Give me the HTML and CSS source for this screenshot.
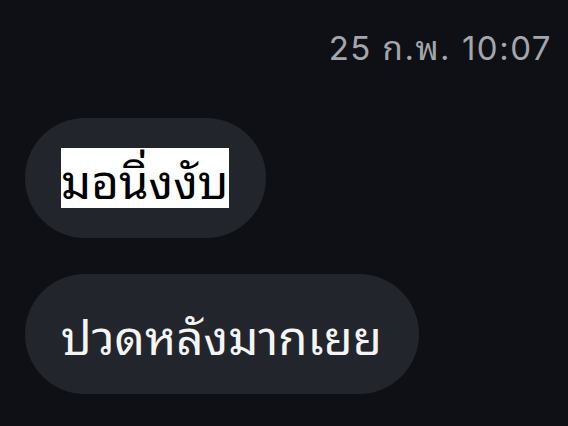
FILE: index.html
```html
<!DOCTYPE html>
<html lang="th">
<head>
    <meta charset="UTF-8">
    <meta name="viewport" content="width=device-width, initial-scale=1.0">
    <title>Chat</title>
    <link rel="stylesheet" href="styles.css">
</head>
<body>
    <div class="chat">
        <div class="chat__time">25 ก.พ. 10:07</div>
        <div class="bubble">
            <span class="bubble__text bubble__text--selected">มอนิ่งงับ</span>
        </div>
        <div class="bubble">
            <span class="bubble__text">ปวดหลังมากเยย</span>
        </div>
    </div>
</body>
</html>
```

FILE: styles.css
```css
* {
    margin: 0;
    padding: 0;
    box-sizing: border-box;
}

body {
    background-color: #0e1015;
    font-family: Inter, "Noto Sans Thai Looped", "Noto Sans Thai", sans-serif;
    width: 568px;
    height: 426px;
    overflow: hidden;
}

.chat {
    display: flex;
    flex-direction: column;
    align-items: flex-start;
    padding: 28px 16px 0 25px;
}

.chat__time {
    align-self: flex-end;
    color: #a3a6ab;
    font-size: 33px;
    letter-spacing: 1.5px;
    line-height: 40px;
    margin-bottom: 50px;
}

.bubble {
    background-color: #22252b;
    border-radius: 60px;
    height: 120px;
    padding: 0 37px 0 36px;
    display: flex;
    align-items: center;
    margin-bottom: 36px;
}

.bubble__text {
    color: #f4f4f5;
    font-family: "Noto Sans Thai Looped", "Noto Sans Thai", sans-serif;
    font-size: 47.5px;
    line-height: 60px;
}

.bubble__text--selected {
    background-color: #ffffff;
    color: #000000;
}
```
